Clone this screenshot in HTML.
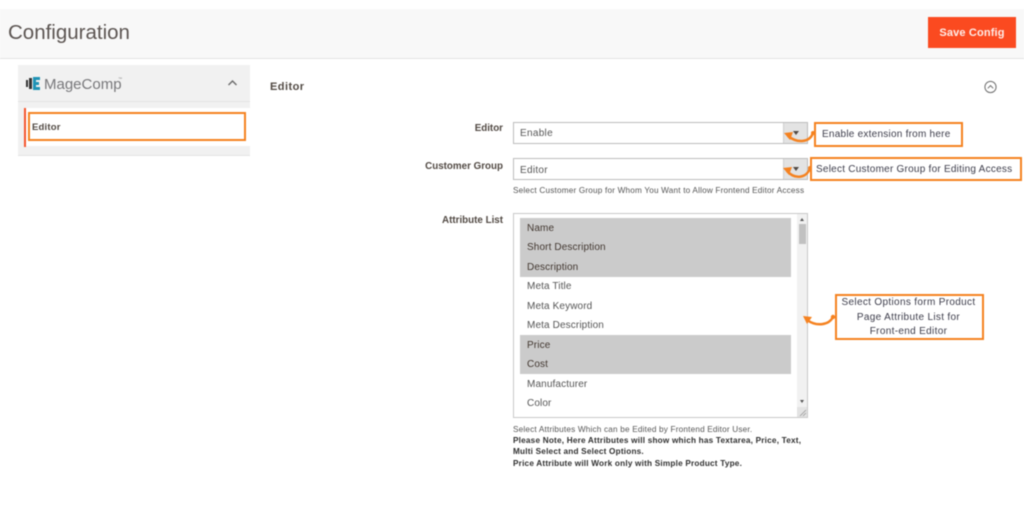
<!DOCTYPE html>
<html><head><meta charset="utf-8">
<style>
html,body{margin:0;padding:0;background:#fff;}
#p{position:relative;width:1024px;height:509px;overflow:hidden;background:#fff;font-family:"Liberation Sans",sans-serif;color:#41362f;filter:blur(.45px);}
.a{position:absolute;white-space:nowrap;}
.b{position:absolute;box-sizing:border-box;}
.lb{font-weight:bold;font-size:9.8px;text-align:right;color:#514943;letter-spacing:0;right:521px;}
.o{font-size:10px;color:#555;left:527px;letter-spacing:.12px;}
.s{color:#41362f;}
.n{font-size:8.2px;color:#555;left:513px;letter-spacing:.19px;}
.nb{font-size:8.2px;font-weight:bold;color:#303030;left:513px;letter-spacing:.21px;}
.c{font-size:10px;color:#3c3c4a;letter-spacing:.24px;}
.sel{border:1px solid #bdbdbd;background:#fff;height:22px;left:513px;width:295px;}
.ar{background:#e3e3e3;border-left:1px solid #cfcfcf;position:absolute;right:0;top:0;bottom:0;width:23px;}
.ar:after{content:"";position:absolute;left:9px;top:8px;border:3px solid transparent;border-top:4px solid #514943;border-bottom:0;}
.ob{border:2px solid #f58220;background:#fff;}
</style></head>
<body><div id="p">
<div class="b" style="left:0;top:9px;width:1024px;height:50px;background:#f8f8f8;border-bottom:1px solid #e3e3e3;"></div>
<div class="a" style="left:8px;top:20px;font-size:20.5px;color:#5c5552;letter-spacing:0;line-height:26px;">Configuration</div>
<div class="b" style="left:928px;top:17px;width:88px;height:31px;background:#fb4a20;"></div>
<div class="a" style="left:928px;top:18px;width:88px;height:31px;line-height:30px;text-align:center;color:#fff;font-size:11px;font-weight:bold;letter-spacing:.15px;opacity:.9;">Save Config</div>

<!-- sidebar -->
<div class="b" style="left:18px;top:65px;width:232px;height:91px;background:#f1f1f1;"></div>
<div class="b" style="left:18px;top:101px;width:232px;height:1px;background:#e3e3e3;"></div>
<div class="b" style="left:18px;top:155px;width:232px;height:1px;background:#e3e3e3;"></div>
<div class="b" style="left:24px;top:108px;width:226px;height:38px;background:#fff;"></div>
<div class="b" style="left:24px;top:108px;width:2px;height:39px;background:#f5552d;"></div>
<div class="b" style="left:28px;top:112px;width:218px;height:29px;border:2px solid #f58220;background:#fff;"></div>
<div class="a" style="left:32px;top:122px;font-size:9.5px;font-weight:bold;color:#514943;letter-spacing:.2px;line-height:12px;">Editor</div>
<svg class="a" style="left:26px;top:76px;" width="16" height="15" viewBox="0 0 16 15">
<rect x="0" y="4" width="2" height="7" fill="#333"/><rect x="3" y="2" width="3" height="11" fill="#333"/>
<path d="M7 1 L14 1 L14 4 L10 4 L10 6 L13 6 L13 9 L10 9 L10 11 L14 11 L14 14 L7 14 Z" fill="#1f93b5"/>
</svg>
<div class="a" style="left:44px;top:76px;font-size:15px;color:#77777a;letter-spacing:0;line-height:18px;">MageComp</div>
<div class="a" style="left:118px;top:76px;font-size:4px;color:#888;">™</div>
<svg class="a" style="left:227px;top:79px;" width="11" height="8" viewBox="0 0 11 8"><path d="M1.5 6 L5.5 2 L9.5 6" fill="none" stroke="#6a6a6a" stroke-width="1.4"/></svg>

<!-- header -->
<div class="a" style="left:270px;top:80px;font-size:11px;font-weight:bold;color:#514943;letter-spacing:.45px;line-height:14px;">Editor</div>
<svg class="a" style="left:983px;top:80px;" width="15" height="15" viewBox="0 0 15 15"><circle cx="7.5" cy="7" r="5.6" fill="none" stroke="#6f6f6f" stroke-width="1"/><path d="M4.8 8.3 L7.5 5.6 L10.2 8.3" fill="none" stroke="#6f6f6f" stroke-width="1"/></svg>

<!-- form -->
<div class="a lb" style="top:123px;line-height:12px;">Editor</div>
<div class="a lb" style="top:161px;line-height:12px;">Customer Group</div>
<div class="a lb" style="top:215px;line-height:12px;">Attribute List</div>

<div class="b sel" style="top:122px;"><div class="ar"></div></div>
<div class="a" style="left:520px;top:128px;font-size:10px;color:#555;letter-spacing:.3px;line-height:12px;">Enable</div>
<div class="b sel" style="top:158px;"><div class="ar"></div></div>
<div class="a" style="left:520px;top:165px;font-size:10px;color:#555;letter-spacing:.3px;line-height:12px;">Editor</div>
<div class="a n" style="top:185px;line-height:11px;">Select Customer Group for Whom You Want to Allow Frontend Editor Access</div>

<!-- list -->
<div class="b" style="left:513px;top:213px;width:295px;height:205px;border:1px solid #c9c9c9;background:#fff;"></div>
<div class="b" style="left:520px;top:218px;width:271px;height:59px;background:#cbcbcb;"></div>
<div class="b" style="left:520px;top:335px;width:271px;height:39px;background:#cbcbcb;"></div>
<div class="b" style="left:797px;top:214px;width:10px;height:203px;background:#f1f1f1;"></div>
<div class="b" style="left:799px;top:224px;width:7px;height:20px;background:#c1c1c1;"></div>
<div class="a" style="left:800px;top:218px;border:2.5px solid transparent;border-bottom:3px solid #555;border-top:0;"></div>
<div class="a" style="left:800px;top:400px;border:2.5px solid transparent;border-top:3px solid #555;border-bottom:0;"></div>
<div class="b" style="left:797px;top:407px;width:10px;height:10px;background:#e3e3e3;"></div>
<svg class="a" style="left:797px;top:407px;" width="10" height="10"><path d="M3 9 L9 3 M6 9 L9 6" stroke="#999" stroke-width=".8"/></svg>

<div class="a o s" style="top:223px;line-height:12px;">Name</div>
<div class="a o s" style="top:242px;line-height:12px;">Short Description</div>
<div class="a o s" style="top:262px;line-height:12px;">Description</div>
<div class="a o" style="top:281px;line-height:12px;">Meta Title</div>
<div class="a o" style="top:301px;line-height:12px;">Meta Keyword</div>
<div class="a o" style="top:320px;line-height:12px;">Meta Description</div>
<div class="a o s" style="top:340px;line-height:12px;">Price</div>
<div class="a o s" style="top:359px;line-height:12px;">Cost</div>
<div class="a o" style="top:379px;line-height:12px;">Manufacturer</div>
<div class="a o" style="top:398px;line-height:12px;">Color</div>

<div class="a n" style="top:424px;line-height:11px;">Select Attributes Which can be Edited by Frontend Editor User.</div>
<div class="a nb" style="top:435px;line-height:11px;">Please Note, Here Attributes will show which has Textarea, Price, Text,</div>
<div class="a nb" style="top:446px;line-height:11px;">Multi Select and Select Options.</div>
<div class="a nb" style="top:458px;line-height:11px;">Price Attribute will Work only with Simple Product Type.</div>

<!-- callouts -->
<div class="b ob" style="left:814px;top:122px;width:149px;height:25px;"></div>
<div class="a c" style="left:822px;top:128px;line-height:13px;">Enable extension from here</div>
<div class="b ob" style="left:810px;top:157px;width:212px;height:24px;"></div>
<div class="a c" style="left:816px;top:163px;line-height:13px;">Select Customer Group for Editing Access</div>
<div class="b ob" style="left:835px;top:294px;width:149px;height:46px;"></div>
<div class="a c" style="left:835px;top:296px;width:147px;text-align:center;line-height:14.5px;white-space:normal;letter-spacing:.33px;">Select Options form Product<br>Page Attribute List for<br>Front-end Editor</div>

<svg class="a" style="left:780px;top:120px;" width="60" height="70" viewBox="0 0 60 70">
<path d="M33 13 C30 22 18 24 8 16" fill="none" stroke="#f58220" stroke-width="2.5"/>
<path d="M4 13 L13 12 L10 20 Z" fill="#f58220"/>
<circle cx="33" cy="13" r="2" fill="#f58220"/>
<path d="M30 48 C27 58 15 60 7 51" fill="none" stroke="#f58220" stroke-width="2.5"/>
<path d="M3 48 L12 47 L9 55 Z" fill="#f58220"/>
<circle cx="30" cy="48" r="2" fill="#f58220"/>
</svg>
<svg class="a" style="left:800px;top:310px;" width="40" height="24" viewBox="0 0 40 24">
<path d="M33 7 C29 15 17 17 7 10" fill="none" stroke="#f58220" stroke-width="2.5"/>
<path d="M3 6 L12 7 L7 14 Z" fill="#f58220"/>
<circle cx="33" cy="7" r="2.2" fill="#f58220"/>
</svg>
</div></body></html>
